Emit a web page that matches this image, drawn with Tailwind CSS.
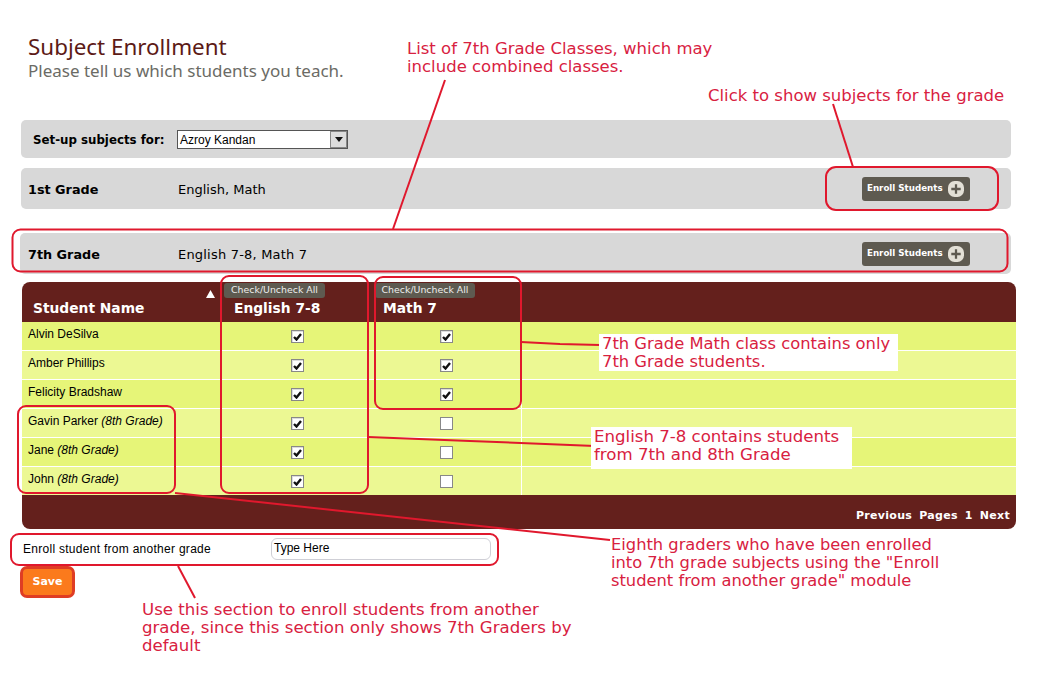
<!DOCTYPE html>
<html>
<head>
<meta charset="utf-8">
<script src="https://cdn.jsdelivr.net/npm/@tailwindcss/browser@4"></script>
</head>
<body class="bg-white">
<div class="relative w-[1041px] h-[696px] overflow-hidden bg-white font-['DejaVu_Sans',sans-serif] text-black">

  <header class="pt-[34px] pl-[28px] h-[120px]">
    <h1 class="font-['Noto_Sans',sans-serif] text-[22.4px] leading-[26px] text-[#5c1a16]">Subject Enrollment</h1>
    <p class="mt-[2px] font-['Noto_Sans',sans-serif] text-[17px] leading-[18px] text-[#6b6b65]">Please tell us which students you teach.</p>
  </header>

  <section class="ml-[21px] w-[990px] h-[38px] rounded-[5px] bg-[#d8d8d8] flex items-center pl-[12px]">
    <span class="w-[144px] pt-[3px] text-[11.8px] font-bold whitespace-nowrap">Set-up subjects for:</span>
    <div class="w-[171px] h-[19px] border border-[#555] bg-white flex items-center justify-between font-['Liberation_Sans',sans-serif] text-[12px] pl-[2px]">
      <span class="pt-[2px]">Azroy Kandan</span>
      <span class="w-[17px] h-[17px] bg-[#ddd] border border-[#888] flex items-center justify-center">
        <svg width="8" height="5" viewBox="0 0 8 5"><path d="M0 0h8L4 5z" fill="#111"/></svg>
      </span>
    </div>
  </section>

  <section class="mt-[10px] ml-[21px] w-[990px] h-[41px] rounded-[5px] bg-[#d8d8d8] flex items-center pl-[7px] text-[13px]">
    <span class="w-[150px] pt-[3px] text-[12.8px] font-bold">1st Grade</span>
    <span class="flex-1 pt-[2px]">English, Math</span>
    <button class="mr-[41px] w-[108px] h-[24px] rounded-[3px] bg-[#5e5a50] text-white text-[8.7px] font-bold flex items-center pl-[5px] gap-[5px] whitespace-nowrap">
      Enroll Students
      <svg width="16" height="16" viewBox="0 0 17 17"><rect width="17" height="17" rx="7" fill="#e3e0d6"/><path d="M8.5 3.5v10M3.5 8.5h10" stroke="#5e5a50" stroke-width="2.4"/></svg>
    </button>
  </section>

  <section class="mt-[24px] ml-[20px] w-[991px] h-[41px] rounded-[5px] bg-[#d8d8d8] flex items-center pl-[8px] text-[13px]">
    <span class="w-[150px] pt-[3px] text-[12.8px] font-bold">7th Grade</span>
    <span class="flex-1 pt-[2px] tracking-[0.2px]">English 7-8, Math 7</span>
    <button class="mr-[41px] w-[108px] h-[24px] rounded-[3px] bg-[#5e5a50] text-white text-[8.7px] font-bold flex items-center pl-[5px] gap-[5px] whitespace-nowrap">
      Enroll Students
      <svg width="16" height="16" viewBox="0 0 17 17"><rect width="17" height="17" rx="7" fill="#e3e0d6"/><path d="M8.5 3.5v10M3.5 8.5h10" stroke="#5e5a50" stroke-width="2.4"/></svg>
    </button>
  </section>

  <section class="mt-[8px] ml-[22px] w-[994px] rounded-[8px] overflow-hidden">
    <div class="grid grid-cols-[200px_150px_149px_1fr] h-[40px] bg-[#64201c] text-white text-[13.8px] font-bold">
      <div class="relative flex items-end pl-[11px] pb-[3px]">Student Name
        <svg class="absolute right-[7px] top-[8px]" width="9" height="8" viewBox="0 0 9 8"><path d="M4.5 0L9 8H0z" fill="#fff"/></svg>
      </div>
      <div class="relative flex items-end pl-[12px] pb-[3px]">English 7-8
        <span class="absolute left-[2px] top-[1px] w-[101px] h-[15px] rounded-[3px] bg-[#5e5a50] text-[#eee] text-[9.4px] font-normal flex items-center justify-center">Check/Uncheck All</span>
      </div>
      <div class="relative flex items-end pl-[11px] pb-[3px]">Math 7
        <span class="absolute left-[3px] top-[1px] w-[100px] h-[15px] rounded-[3px] bg-[#5e5a50] text-[#eee] text-[9.4px] font-normal flex items-center justify-center">Check/Uncheck All</span>
      </div>
      <div></div>
    </div>

    <div class="grid grid-cols-[200px_150px_149px_1fr] h-[29px] bg-[#e6f578] border-b border-white font-['Liberation_Sans',sans-serif] text-[12px]">
      <div class="pl-[6px] pt-[3px]">Alvin DeSilva</div>
      <div class="flex items-center justify-center pt-[1px]"><span class="w-[13px] h-[13px] border border-[#888] bg-white shadow-[inset_1px_1px_0_#ddd] flex items-center justify-center"><svg width="9" height="8" viewBox="0 0 9 8"><path d="M1 4l2.5 2.5L8 1" fill="none" stroke="#111" stroke-width="2.4"/></svg></span></div>
      <div class="flex items-center justify-center pt-[1px]"><span class="w-[13px] h-[13px] border border-[#888] bg-white shadow-[inset_1px_1px_0_#ddd] flex items-center justify-center"><svg width="9" height="8" viewBox="0 0 9 8"><path d="M1 4l2.5 2.5L8 1" fill="none" stroke="#111" stroke-width="2.4"/></svg></span></div>
      <div class="border-l border-white"></div>
    </div>
    <div class="grid grid-cols-[200px_150px_149px_1fr] h-[29px] bg-[#ecf893] border-b border-white font-['Liberation_Sans',sans-serif] text-[12px]">
      <div class="pl-[6px] pt-[3px]">Amber Phillips</div>
      <div class="flex items-center justify-center pt-[1px]"><span class="w-[13px] h-[13px] border border-[#888] bg-white shadow-[inset_1px_1px_0_#ddd] flex items-center justify-center"><svg width="9" height="8" viewBox="0 0 9 8"><path d="M1 4l2.5 2.5L8 1" fill="none" stroke="#111" stroke-width="2.4"/></svg></span></div>
      <div class="flex items-center justify-center pt-[1px]"><span class="w-[13px] h-[13px] border border-[#888] bg-white shadow-[inset_1px_1px_0_#ddd] flex items-center justify-center"><svg width="9" height="8" viewBox="0 0 9 8"><path d="M1 4l2.5 2.5L8 1" fill="none" stroke="#111" stroke-width="2.4"/></svg></span></div>
      <div class="border-l border-white"></div>
    </div>
    <div class="grid grid-cols-[200px_150px_149px_1fr] h-[29px] bg-[#e6f578] border-b border-white font-['Liberation_Sans',sans-serif] text-[12px]">
      <div class="pl-[6px] pt-[3px]">Felicity Bradshaw</div>
      <div class="flex items-center justify-center pt-[1px]"><span class="w-[13px] h-[13px] border border-[#888] bg-white shadow-[inset_1px_1px_0_#ddd] flex items-center justify-center"><svg width="9" height="8" viewBox="0 0 9 8"><path d="M1 4l2.5 2.5L8 1" fill="none" stroke="#111" stroke-width="2.4"/></svg></span></div>
      <div class="flex items-center justify-center pt-[1px]"><span class="w-[13px] h-[13px] border border-[#888] bg-white shadow-[inset_1px_1px_0_#ddd] flex items-center justify-center"><svg width="9" height="8" viewBox="0 0 9 8"><path d="M1 4l2.5 2.5L8 1" fill="none" stroke="#111" stroke-width="2.4"/></svg></span></div>
      <div class="border-l border-white"></div>
    </div>
    <div class="grid grid-cols-[200px_150px_149px_1fr] h-[29px] bg-[#ecf893] border-b border-white font-['Liberation_Sans',sans-serif] text-[12px]">
      <div class="pl-[6px] pt-[3px]">Gavin Parker <em>(8th Grade)</em></div>
      <div class="flex items-center justify-center pt-[1px]"><span class="w-[13px] h-[13px] border border-[#888] bg-white shadow-[inset_1px_1px_0_#ddd] flex items-center justify-center"><svg width="9" height="8" viewBox="0 0 9 8"><path d="M1 4l2.5 2.5L8 1" fill="none" stroke="#111" stroke-width="2.4"/></svg></span></div>
      <div class="flex items-center justify-center pt-[1px]"><span class="w-[13px] h-[13px] border border-[#888] bg-white"></span></div>
      <div class="border-l border-white"></div>
    </div>
    <div class="grid grid-cols-[200px_150px_149px_1fr] h-[29px] bg-[#e6f578] border-b border-white font-['Liberation_Sans',sans-serif] text-[12px]">
      <div class="pl-[6px] pt-[3px]">Jane <em>(8th Grade)</em></div>
      <div class="flex items-center justify-center pt-[1px]"><span class="w-[13px] h-[13px] border border-[#888] bg-white shadow-[inset_1px_1px_0_#ddd] flex items-center justify-center"><svg width="9" height="8" viewBox="0 0 9 8"><path d="M1 4l2.5 2.5L8 1" fill="none" stroke="#111" stroke-width="2.4"/></svg></span></div>
      <div class="flex items-center justify-center pt-[1px]"><span class="w-[13px] h-[13px] border border-[#888] bg-white"></span></div>
      <div class="border-l border-white"></div>
    </div>
    <div class="grid grid-cols-[200px_150px_149px_1fr] h-[28px] bg-[#ecf893] font-['Liberation_Sans',sans-serif] text-[12px]">
      <div class="pl-[6px] pt-[3px]">John <em>(8th Grade)</em></div>
      <div class="flex items-center justify-center pt-[1px]"><span class="w-[13px] h-[13px] border border-[#888] bg-white shadow-[inset_1px_1px_0_#ddd] flex items-center justify-center"><svg width="9" height="8" viewBox="0 0 9 8"><path d="M1 4l2.5 2.5L8 1" fill="none" stroke="#111" stroke-width="2.4"/></svg></span></div>
      <div class="flex items-center justify-center pt-[1px]"><span class="w-[13px] h-[13px] border border-[#888] bg-white"></span></div>
      <div class="border-l border-white"></div>
    </div>

    <div class="h-[34px] bg-[#64201c] text-white text-[11px] font-bold flex items-end justify-end gap-[7px] pr-[6px] pb-[5px] tracking-[0.3px]">
      <span>Previous</span><span>Pages</span><span>1</span><span>Next</span>
    </div>
  </section>

  <section class="mt-[8px] ml-[23px] flex items-center h-[24px] font-['Liberation_Sans',sans-serif] text-[12px]">
    <span class="w-[248px] tracking-[0.28px]">Enroll student from another grade</span>
    <div class="w-[220px] h-[22px] rounded-[6px] border border-[#cfcfd6] bg-white pl-[2px] leading-[19px]">Type Here</div>
  </section>

  <button class="mt-[5px] ml-[20px] block w-[55px] h-[32px] rounded-[7px] border-[3px] border-[#df3d24] bg-[#fb7a1c] text-white text-[11px] font-bold">Save</button>

  <!-- Annotations laid over the page -->
  <svg class="absolute inset-0 pointer-events-none" width="1041" height="696" viewBox="0 0 1041 696" fill="none" stroke="#e0182d" stroke-width="2">
    <rect x="12.5" y="229.5" width="995" height="42" rx="8"/>
    <rect x="826" y="167" width="172" height="43" rx="10"/>
    <rect x="221" y="276" width="147" height="217" rx="8"/>
    <rect x="375" y="277" width="146" height="132" rx="8"/>
    <rect x="18" y="406" width="157" height="87" rx="8"/>
    <rect x="11" y="534" width="487" height="31" rx="8"/>
    <path d="M445 80L393 229"/>
    <path d="M833 104L853 167"/>
    <path d="M521 342L560 344L600 345"/>
    <path d="M368 437L470 441L595 446"/>
    <path d="M175 493L610 540"/>
    <path d="M178 566L195 598"/>
  </svg>

  <div class="absolute left-[407px] top-[40px] text-[16.5px] leading-[18px] text-[#d8213f] whitespace-pre">List of 7th Grade Classes, which may
include combined classes.</div>
  <div class="absolute left-[708px] top-[87px] text-[16.5px] leading-[18px] text-[#d8213f] whitespace-pre">Click to show subjects for the grade</div>
  <div class="absolute left-[599px] top-[334px] w-[299px] h-[37px] pl-[3px] pt-[1px] bg-white text-[16.35px] leading-[18px] text-[#d8213f] whitespace-pre">7th Grade Math class contains only
7th Grade students.</div>
  <div class="absolute left-[591px] top-[427px] w-[261px] h-[42px] pl-[3px] pt-[1px] bg-white text-[16.6px] leading-[18px] text-[#d8213f] whitespace-pre">English 7-8 contains students
from 7th and 8th Grade</div>
  <div class="absolute left-[611px] top-[536px] text-[16.3px] leading-[18px] text-[#d8213f] whitespace-pre">Eighth graders who have been enrolled
into 7th grade subjects using the "Enroll
student from another grade" module</div>
  <div class="absolute left-[142px] top-[601px] text-[16.6px] leading-[18px] text-[#d8213f] whitespace-pre">Use this section to enroll students from another
grade, since this section only shows 7th Graders by
default</div>
</div>
</body>
</html>
